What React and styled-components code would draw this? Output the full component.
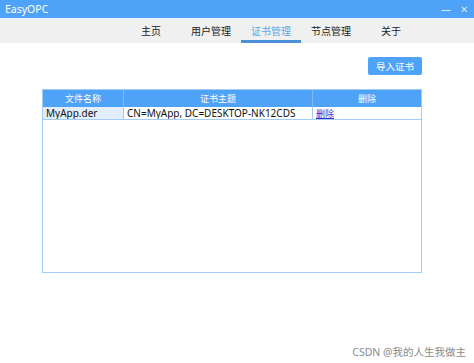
import styled, { createGlobalStyle } from "styled-components";

const Global = createGlobalStyle`
  body {
    margin: 0;
    background: #fff;
    font-family: "Noto Sans", "Noto Sans CJK SC", sans-serif;
  }
`;

const tabs = ["主页", "用户管理", "证书管理", "节点管理", "关于"];

export default function App() {
  return (
    <Window>
      <Global />
      <TitleBar>
        <Title>EasyOPC</Title>
        <WinButtons>
          <WinBtn>—</WinBtn>
          <WinBtn>✕</WinBtn>
        </WinButtons>
      </TitleBar>
      <NavBar>
        {tabs.map((t) => (
          <Tab key={t} $active={t === "证书管理"}>
            {t}
          </Tab>
        ))}
      </NavBar>
      <Content>
        <Toolbar>
          <ImportButton>导入证书</ImportButton>
        </Toolbar>
        <Table>
          <HeaderRow>
            <HeadCell $w={81}>文件名称</HeadCell>
            <HeadCell $w={189}>证书主题</HeadCell>
            <HeadCell $w={108} $last>删除</HeadCell>
          </HeaderRow>
          <Row>
            <Cell $w={81} $selected>MyApp.der</Cell>
            <Cell $w={189}>CN=MyApp, DC=DESKTOP-NK12CDS</Cell>
            <Cell $w={108} $last>
              <DeleteLink>删除</DeleteLink>
            </Cell>
          </Row>
        </Table>
      </Content>
      <Watermark>CSDN @我的人生我做主</Watermark>
    </Window>
  );
}

const Window = styled.div`
  width: 474px;
  height: 363px;
  display: flex;
  flex-direction: column;
  background: #fff;
  overflow: hidden;
`;

const TitleBar = styled.div`
  height: 18px;
  background: #4ea2f7;
  display: flex;
  align-items: center;
  justify-content: space-between;
  padding: 0 6px 0 5px;
  flex-shrink: 0;
`;

const Title = styled.div`
  color: #fff;
  font-size: 10.5px;
  font-family: "Noto Sans", "Noto Sans CJK SC", sans-serif;
`;

const WinButtons = styled.div`
  display: flex;
  gap: 9px;
  align-items: center;
`;

const WinBtn = styled.span`
  color: #d6e8fc;
  font-size: 10px;
  line-height: 1;
`;

const NavBar = styled.div`
  height: 25px;
  background: #f0f0f0;
  display: flex;
  padding-left: 121px;
  flex-shrink: 0;
`;

const Tab = styled.div`
  width: 60px;
  display: flex;
  align-items: center;
  justify-content: center;
  font-size: 10px;
  color: ${(p) => (p.$active ? "#5aa6ee" : "#222")};
  box-shadow: ${(p) => (p.$active ? "inset 0 -3px 0 #4a90d9" : "none")};
  font-family: "Noto Sans CJK SC", sans-serif;
`;

const Content = styled.div`
  padding: 14px 52px 0 42px;
  display: flex;
  flex-direction: column;
`;

const Toolbar = styled.div`
  display: flex;
  justify-content: flex-end;
  margin-bottom: 14px;
`;

const ImportButton = styled.button`
  width: 54px;
  height: 18px;
  border: none;
  border-radius: 2px;
  background: #4ea2f7;
  color: #fff;
  font-size: 9.5px;
  padding: 0;
  font-family: "Noto Sans CJK SC", sans-serif;
`;

const Table = styled.div`
  width: 380px;
  height: 184px;
  box-sizing: border-box;
  border: 1px solid #a4cdf5;
  display: flex;
  flex-direction: column;
`;

const HeaderRow = styled.div`
  display: flex;
  height: 17px;
  background: #4ea2f7;
`;

const HeadCell = styled.div`
  width: ${(p) => p.$w}px;
  flex: ${(p) => (p.$last ? "1" : "none")};
  box-sizing: border-box;
  border-right: ${(p) => (p.$last ? "none" : "1px solid #7db9f3")};
  color: #fff;
  font-size: 9px;
  display: flex;
  align-items: center;
  justify-content: center;
  font-family: "Noto Sans CJK SC", sans-serif;
`;

const Row = styled.div`
  display: flex;
  height: 12px;
  border-bottom: 1px solid #a4cdf5;
`;

const Cell = styled.div`
  width: ${(p) => p.$w}px;
  flex: ${(p) => (p.$last ? "1" : "none")};
  box-sizing: border-box;
  border-right: ${(p) => (p.$last ? "none" : "1px solid #a4cdf5")};
  background: ${(p) => (p.$selected ? "#e2eefb" : "#fff")};
  color: #111;
  font-size: 10px;
  line-height: 12px;
  padding-left: 3px;
  white-space: nowrap;
  overflow: hidden;
  font-family: "Noto Sans", "Noto Sans CJK SC", sans-serif;
`;

const DeleteLink = styled.span`
  color: #3a2fd0;
  text-decoration: underline;
  font-size: 9px;
  font-family: "Noto Sans CJK SC", sans-serif;
`;

const Watermark = styled.div`
  margin-top: auto;
  align-self: flex-end;
  margin-right: 8px;
  margin-bottom: 4px;
  color: #8a8a8a;
  font-size: 10.5px;
  font-family: "Noto Sans", "Noto Sans CJK SC", sans-serif;
`;
